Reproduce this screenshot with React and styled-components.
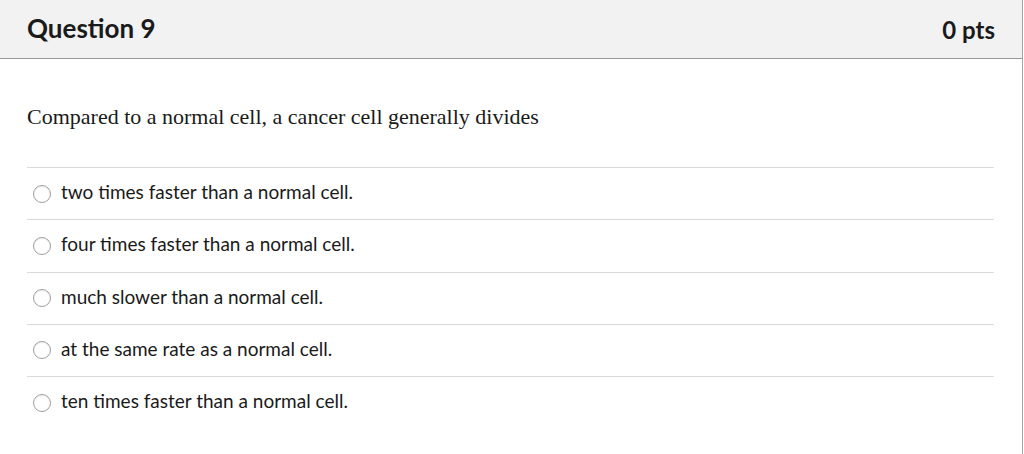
import React from "react";
import styled, { createGlobalStyle } from "styled-components";

const GlobalStyle = createGlobalStyle`
  html, body {
    margin: 0;
    padding: 0;
    background: #ffffff;
  }
  body {
    font-family: Lato, "Liberation Sans", sans-serif;
    color: #2d3b45;
  }
`;

const answers = [
  "two times faster than a normal cell.",
  "four times faster than a normal cell.",
  "much slower than a normal cell.",
  "at the same rate as a normal cell.",
  "ten times faster than a normal cell.",
];

export default function App() {
  return (
    <>
      <GlobalStyle />
      <Panel>
        <Header>
          <Title>Question 9</Title>
          <Points>0 pts</Points>
        </Header>
        <Body>
          <Prompt>Compared to a normal cell, a cancer cell generally divides</Prompt>
          <Answers>
            {answers.map((text, i) => (
              <Answer key={i}>
                <Radio />
                <AnswerText>{text}</AnswerText>
              </Answer>
            ))}
          </Answers>
        </Body>
      </Panel>
    </>
  );
}

const Panel = styled.div`
  width: 1022px;
  height: 454px;
  border-right: 1px solid #a3a3a3;
  background: #ffffff;
`;

const Header = styled.div`
  height: 59px;
  box-sizing: border-box;
  background: #f2f2f2;
  border-bottom: 1px solid #999999;
  display: flex;
  align-items: center;
  justify-content: space-between;
  padding: 0 27px 0 27px;
`;

const Title = styled.h2`
  margin: 0;
  font-family: Lato, "Liberation Sans", sans-serif;
  font-weight: 700;
  font-size: 26px;
  line-height: 30px;
  color: #1a1a1a;
  padding-bottom: 3px;
`;

const Points = styled.span`
  font-family: Lato, "Liberation Sans", sans-serif;
  font-weight: 700;
  font-size: 24px;
  line-height: 30px;
  color: #1a1a1a;
  padding-top: 1px;
`;

const Body = styled.div`
  padding: 0 28px 0 27px;
`;

const Prompt = styled.p`
  margin: 0;
  padding: 45px 0 37px;
  font-family: "Liberation Serif", "Times New Roman", serif;
  font-size: 22px;
  line-height: 26px;
  color: #1a1a1a;
`;

const Answers = styled.div`
  display: flex;
  flex-direction: column;
`;

const Answer = styled.div`
  height: 52.25px;
  box-sizing: border-box;
  border-top: 1px solid #dadada;
  display: flex;
  align-items: center;
  gap: 10px;
  padding-left: 6px;
`;

const Radio = styled.span`
  width: 18px;
  height: 18px;
  box-sizing: border-box;
  border-radius: 50%;
  border: 1px solid #a0a0a0;
  background: #ffffff;
  box-shadow: inset 0 1px 2px rgba(0, 0, 0, 0.08);
  flex-shrink: 0;
`;

const AnswerText = styled.span`
  font-family: Lato, "Liberation Sans", sans-serif;
  font-size: 19px;
  line-height: 24px;
  color: #1a1a1a;
  padding-bottom: 3px;
`;
